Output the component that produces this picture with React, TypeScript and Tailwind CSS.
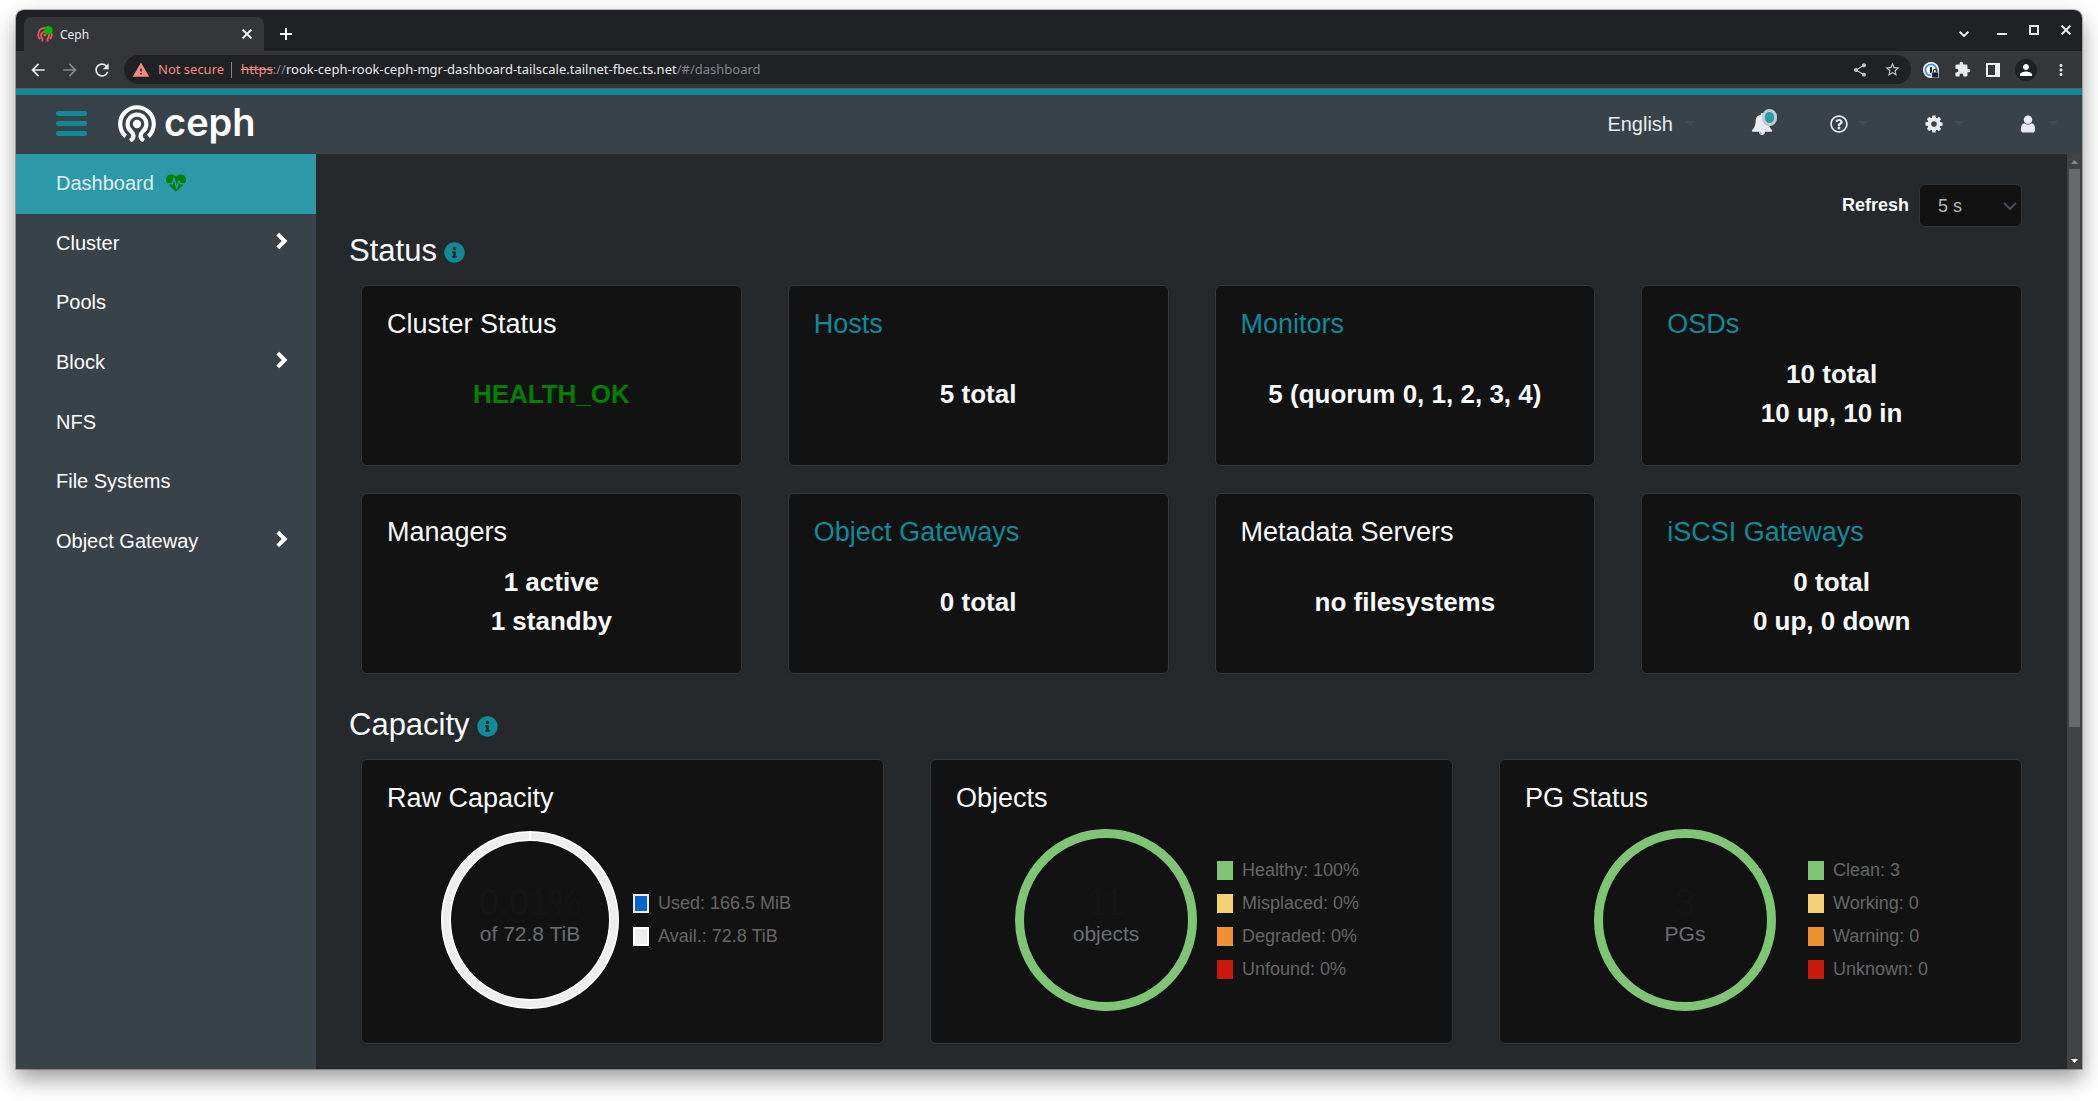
import React from 'react';
import { FaInfoCircle, FaRegQuestionCircle } from 'react-icons/fa';
import {
  MdArrowBack,
  MdArrowForward,
  MdExtension,
  MdMoreVert,
  MdPerson,
  MdRefresh,
  MdShare,
  MdStarBorder,
  MdWarning,
} from 'react-icons/md';

type Slice = { label: string; color: string };

type StatusCardData = { title: string; link?: boolean; lines: string[]; ok?: boolean };

type ChartData = {
  title: string;
  value: string;
  unit: string;
  ring: 'white' | 'green';
  layout: string;
  slices: Slice[];
};

const menu = [
  { name: 'Dashboard', active: true },
  { name: 'Cluster', children: true },
  { name: 'Pools' },
  { name: 'Block', children: true },
  { name: 'NFS' },
  { name: 'File Systems' },
  { name: 'Object Gateway', children: true },
];

const statusCards: StatusCardData[] = [
  { title: 'Cluster Status', lines: ['HEALTH_OK'], ok: true },
  { title: 'Hosts', link: true, lines: ['5 total'] },
  { title: 'Monitors', link: true, lines: ['5 (quorum 0, 1, 2, 3, 4)'] },
  { title: 'OSDs', link: true, lines: ['10 total', '10 up, 10 in'] },
  { title: 'Managers', lines: ['1 active', '1 standby'] },
  { title: 'Object Gateways', link: true, lines: ['0 total'] },
  { title: 'Metadata Servers', lines: ['no filesystems'] },
  { title: 'iSCSI Gateways', link: true, lines: ['0 total', '0 up, 0 down'] },
];

const charts: ChartData[] = [
  {
    title: 'Raw Capacity',
    value: '0.01%',
    unit: 'of 72.8 TiB',
    ring: 'white',
    layout: 'gap-3 pl-[52px]',
    slices: [
      { label: 'Used: 166.5 MiB', color: 'bg-[#0066cc] border-2 border-[#ededed]' },
      { label: 'Avail.: 72.8 TiB', color: 'bg-[#ededed] border-2 border-white' },
    ],
  },
  {
    title: 'Objects',
    value: '11',
    unit: 'objects',
    ring: 'green',
    layout: 'gap-5 pl-[59px]',
    slices: [
      { label: 'Healthy: 100%', color: 'bg-[#7ec674]' },
      { label: 'Misplaced: 0%', color: 'bg-[#f5d174]' },
      { label: 'Degraded: 0%', color: 'bg-[#ef9234]' },
      { label: 'Unfound: 0%', color: 'bg-[#c9190b]' },
    ],
  },
  {
    title: 'PG Status',
    value: '3',
    unit: 'PGs',
    ring: 'green',
    layout: 'gap-8 pl-[69px]',
    slices: [
      { label: 'Clean: 3', color: 'bg-[#7ec674]' },
      { label: 'Working: 0', color: 'bg-[#f5d174]' },
      { label: 'Warning: 0', color: 'bg-[#ef9234]' },
      { label: 'Unknown: 0', color: 'bg-[#c9190b]' },
    ],
  },
];

const BellIcon = () => (
  <svg viewBox="0 0 1792 1792" className="size-[22px]" fill="currentColor" aria-hidden="true">
    <path d="M912 1696q0-16-16-16-59 0-101.5-42.5t-42.5-101.5q0-16-16-16t-16 16q0 73 51.5 124.5t124.5 51.5q16 0 16-16zm816-288q0 52-38 90t-90 38h-448q0 106-75 181t-181 75-181-75-75-181h-448q-52 0-90-38t-38-90q50-42 91-88t85-119.5 74.5-158.5 50-206 19.5-260q0-152 117-282.5t307-158.5q-8-19-8-39 0-40 28-68t68-28 68 28 28 68q0 20-8 39 190 28 307 158.5t117 282.5q0 139 19.5 260t50 206 74.5 158.5 85 119.5 91 88z" />
  </svg>
);

const CogIcon = () => (
  <svg viewBox="0 0 1792 1792" className="size-5" fill="currentColor" aria-hidden="true">
    <path d="M1152 896q0-106-75-181t-181-75-181 75-75 181 75 181 181 75 181-75 75-181zm512-109v222q0 12-8 23t-20 13l-185 28q-19 54-39 91 35 50 107 138 10 12 10 25t-9 23q-27 37-99 108t-94 71q-12 0-26-9l-138-108q-44 23-91 38-16 136-29 186-7 28-36 28h-222q-14 0-24.5-8.5t-11.5-21.5l-28-184q-49-16-90-37l-141 107q-10 9-25 9-14 0-25-11-126-114-165-168-7-10-7-23 0-12 8-23 15-21 51-66.5t54-70.5q-27-50-41-99l-183-27q-13-2-21-12.5t-8-23.5v-222q0-12 8-23t19-13l186-28q14-46 39-92-40-57-107-138-10-12-10-24 0-10 9-23 26-36 98.5-107.5t94.5-71.5q13 0 26 10l138 107q44-23 91-38 16-136 29-186 7-28 36-28h222q14 0 24.5 8.5t11.5 21.5l28 184q49 16 90 37l142-107q9-9 24-9 13 0 25 10 129 119 165 170 7 8 7 22 0 12-8 23-15 21-51 66.5t-54 70.5q26 50 41 98l183 28q13 2 21 12.5t8 23.5z" />
  </svg>
);

const UserIcon = () => (
  <svg viewBox="0 0 1792 1792" className="size-5" fill="currentColor" aria-hidden="true">
    <path d="M1536 1399q0 109-62.5 187t-150.5 78h-854q-88 0-150.5-78t-62.5-187q0-85 8.5-160.5t31.5-152 58.5-131 94-89 134.5-34.5q131 128 313 128t313-128q76 0 134.5 34.5t94 89 58.5 131 31.5 152 8.5 160.5zm-256-887q0 159-112.5 271.5t-271.5 112.5-271.5-112.5-112.5-271.5 112.5-271.5 271.5-112.5 271.5 112.5 112.5 271.5z" />
  </svg>
);

const HeartbeatIcon = () => (
  <svg viewBox="0 0 1792 1792" className="size-5" fill="#008000" aria-hidden="true">
    <path d="M1280 1024h305q-5 6-10 10.5t-9 7.5l-3 4-623 600q-18 18-44 18t-44-18l-624-602q-5-2-21-20h369q22 0 39.5-13.5t22.5-34.5l70-281 190 667q6 20 23 33t39 13q21 0 38-13t23-33l146-485 56 112q18 35 57 35zm512-428q0 145-103 300h-369l-111-221q-8-17-25.5-27t-36.5-8q-45 5-56 46l-129 430-196-686q-6-20-23.5-33t-39.5-13-39 13.5-22 34.5l-116 464h-423q-103-155-103-300 0-220 127-344t351-124q62 0 126.5 21.5t120 58 95.5 68.5 76 68q36-36 76-68t95.5-68.5 120-58 126.5-21.5q224 0 351 124t127 344z" />
  </svg>
);

const CephMark = () => (
  <svg viewBox="0 0 38 37" className="h-[37px] w-[38px]" fill="none" stroke="#fff" aria-hidden="true">
    <circle cx="19" cy="19" r="4.2" fill="#fff" stroke="none" />
    <path strokeWidth="4.2" d="M7.6 31.4A16.8 16.8 0 1 1 30.4 31.4" />
    <path
      strokeWidth="4.2"
      d="M12.2 35.8Q15.8 33.4 15.4 30.4Q15.2 28.6 13.2 26.4A9.4 9.4 0 1 1 24.8 26.4Q22.8 28.6 22.6 30.4Q22.2 33.4 25.8 35.8"
    />
  </svg>
);

const TabIcon = () => (
  <svg viewBox="0 0 16 16" className="size-4" fill="none" aria-hidden="true">
    <path stroke="#ee5c54" strokeWidth="1.8" d="M3 13.2A6.8 6.8 0 1 1 13 13.2M5.4 15.4V12.600A4 4 0 1 1 10.600 12.600V15.4" />
    <circle cx="8" cy="9" r="1.4" fill="#ee5c54" />
    <circle cx="11.500" cy="4.300" r="4.200" fill="#00b800" />
  </svg>
);

const PasswordIcon = () => (
  <svg viewBox="0 0 16 16" className="size-4" aria-hidden="true">
    <circle cx="8" cy="8" r="8" fill="#fff" />
    <circle cx="8" cy="8" r="5.6" fill="#fff" stroke="#3b92f3" strokeWidth="1.8" />
    <rect x="7" y="5" width="2" height="6" rx="0.6" fill="#202124" />
    <rect x="8.6" y="10" width="7" height="6" rx="1" fill="#202124" stroke="#fff" strokeWidth="0.7" />
    <path d="M10.4 10V9a1.700 1.700 0 0 1 3.400 0v1" fill="none" stroke="#202124" strokeWidth="1.2" />
  </svg>
);

const ChevronIcon = () => (
  <svg viewBox="0 0 12 18" className="mb-1 ml-auto h-[18px] w-3" fill="none" stroke="currentColor" strokeWidth="4" aria-hidden="true">
    <path d="M1.800 2.200 8.600 9l-6.800 6.800" />
  </svg>
);

const CrossIcon = () => (
  <svg viewBox="0 0 10 10" className="size-2.5" stroke="currentColor" strokeWidth="2" aria-hidden="true">
    <path d="M.6.6l8.8 8.8M9.4.6.6 9.4" />
  </svg>
);

const Caret = () => (
  <svg viewBox="0 0 10 5" className="h-[5px] w-[10px]" aria-hidden="true">
    <path d="M0 0h10L5 5z" fill="#474a4c" />
  </svg>
);

const BrowserChrome: React.FC = () => (
  <div className="font-['Noto_Sans',sans-serif] text-xs text-[#e8eaed]">
    {/* Tab strip */}
    <div className="flex h-[41px] items-end bg-[#202124] pl-2">
      <div className="flex h-[34px] w-60 items-center rounded-t-lg bg-[#35363a] pr-2 pl-[13px]">
        <TabIcon />
        <span className="ml-[7px] flex-1 pt-0.5">Ceph</span>
        <button aria-label="Close tab" className="p-1">
          <CrossIcon />
        </button>
      </div>
      <button aria-label="New tab" className="ml-3.5 flex h-[34px] items-center px-0.5">
        <svg viewBox="0 0 12 12" className="size-3" stroke="#fff" strokeWidth="2" aria-hidden="true">
          <path d="M6 0v12M0 6h12" />
        </svg>
      </button>
      <div className="ml-auto flex h-full items-center gap-3 pr-1.5">
        <button aria-label="Search tabs" className="mr-1.5 flex size-5 items-center justify-center pt-1.5">
          <svg viewBox="0 0 10 6" className="h-1.5 w-2.5" fill="none" stroke="currentColor" strokeWidth="2" aria-hidden="true">
            <path d="M.6.8 5 5 9.4.8" />
          </svg>
        </button>
        <button aria-label="Minimize" className="flex size-5 items-center justify-center pt-1.5">
          <span className="h-0.5 w-2.5 bg-[#e8eaed]" />
        </button>
        <button aria-label="Maximize" className="flex size-5 items-center justify-center pb-0.5">
          <span className="size-2.5 border-2 border-[#e8eaed]" />
        </button>
        <button aria-label="Close window" className="flex size-5 items-center justify-center pb-0.5">
          <CrossIcon />
        </button>
      </div>
    </div>

    {/* Toolbar */}
    <div className="flex h-[38px] items-center border-b border-[#5c5d60] bg-[#35363a] pr-3 pl-3">
      <div className="flex items-center gap-3 pr-3">
        <button aria-label="Back">
          <MdArrowBack className="size-5" />
        </button>
        <button aria-label="Forward" className="text-[#87888b]">
          <MdArrowForward className="size-5" />
        </button>
        <button aria-label="Reload">
          <MdRefresh className="size-5" />
        </button>
      </div>
      <div className="flex h-[29px] flex-1 items-center rounded-full bg-[#202124] pr-2.5 pl-2">
        <MdWarning className="size-[18px] text-[#f28b82]" />
        <span className="ml-2 text-[13px] text-[#f28b82]">Not secure</span>
        <span className="mr-[9px] ml-[7px] h-4 w-px bg-[#80868b]" />
        <span className="flex-1 text-[13px] text-[#80868b]">
          <span className="text-[#f28b82] line-through">https</span>://
          <span className="text-[#e8eaed]">rook-ceph-rook-ceph-mgr-dashboard-tailscale.tailnet-fbec.ts.net</span>
          /#/dashboard
        </span>
        <button aria-label="Share" className="mr-4 text-[#c4c7c5]">
          <MdShare className="size-4" />
        </button>
        <button aria-label="Bookmark" className="text-[#c4c7c5]">
          <MdStarBorder className="size-[17px]" />
        </button>
      </div>
      <div className="flex items-center gap-[15px] pl-3">
        <button aria-label="Password manager">
          <PasswordIcon />
        </button>
        <button aria-label="Extensions">
          <MdExtension className="size-[17px]" />
        </button>
        <button aria-label="Side panel" className="size-3.5 border-2 border-r-[5px] border-[#f1f3f4]" />
        <button aria-label="Profile" className="flex size-[22px] items-center justify-center rounded-full bg-[#202124]">
          <MdPerson className="size-[18px] text-white" />
        </button>
        <button aria-label="Browser menu">
          <MdMoreVert className="size-[18px]" />
        </button>
      </div>
    </div>
  </div>
);

const Navbar: React.FC = () => (
  <header className="flex h-[65px] items-center border-t-[6px] border-[#118a98] bg-[#374249] pb-0.5 text-xl text-[#e9ecef]">
    <button aria-label="Toggle sidebar" className="ml-10 flex flex-col gap-[5px]">
      <span className="h-[5px] w-[31px] rounded-xs bg-[#118a98]" />
      <span className="h-[5px] w-[31px] rounded-xs bg-[#118a98]" />
      <span className="h-[5px] w-[31px] rounded-xs bg-[#118a98]" />
    </button>
    <a href="#/dashboard" className="ml-[31px] flex items-center gap-2 text-white">
      <CephMark />
      <span className="pb-1 font-['Inter',sans-serif] text-[38px] leading-9 font-semibold">ceph</span>
    </a>
    <div className="ml-auto flex items-center pr-6">
      <button className="flex items-center gap-3">
        English <Caret />
      </button>
      <button aria-label="Notifications" className="relative ml-[56px]">
        <BellIcon />
        <span className="absolute -top-1 -right-1 h-[17px] w-[15px] rounded-full border-[3px] border-[#becbd1] bg-[#2b99a8]" />
      </button>
      <button aria-label="Help" className="ml-[57px] flex items-center gap-2.5">
        <FaRegQuestionCircle className="size-[18px]" />
        <Caret />
      </button>
      <button aria-label="Settings" className="ml-[56px] flex items-center gap-2.5">
        <CogIcon />
        <Caret />
      </button>
      <button aria-label="Account" className="ml-[54px] flex items-center gap-2.5">
        <UserIcon />
        <Caret />
      </button>
    </div>
  </header>
);

const Sidebar: React.FC = () => (
  <nav className="w-[300px] shrink-0 bg-[#374249] text-xl text-white">
    <ul className="grid h-[418px] grid-rows-7">
      {menu.map((item) => (
        <li key={item.name}>
          <a
            href="#/"
            className={`flex h-full items-center pr-7 pb-0.5 pl-10 ${item.active ? 'bg-[#2b99a8] text-[#e0eef0]' : ''}`}
          >
            {item.name}
            {item.active && (
              <span className="ml-3">
                <HeartbeatIcon />
              </span>
            )}
            {item.children && <ChevronIcon />}
          </a>
        </li>
      ))}
    </ul>
  </nav>
);

const SectionTitle: React.FC<{ children: React.ReactNode }> = ({ children }) => (
  <h2 className="mb-2.5 flex items-center gap-[7px] text-[31px] leading-[48px] text-[#f8f9fa]">
    {children}
    <FaInfoCircle className="mt-0.5 size-[21px] text-[#118a98]" />
  </h2>
);

const Card: React.FC<{ title: string; link?: boolean; children: React.ReactNode }> = ({ title, link, children }) => (
  <section className="rounded-md border border-[#34383b] bg-[#121212] px-[25px] pt-[22px] pb-8 shadow-sm">
    <h3 className="mb-[15px] text-[27px] leading-8 text-[#f8f9fa]">
      {link ? (
        <a href="#/" className="text-[#118a98]">
          {title}
        </a>
      ) : (
        title
      )}
    </h3>
    {children}
  </section>
);

const Donut: React.FC<{ chart: ChartData }> = ({ chart }) => (
  <div className="relative flex size-[182px] shrink-0 flex-col items-center justify-center pb-2">
    <svg viewBox="0 0 182 182" className="absolute inset-0" fill="none" aria-hidden="true">
      {chart.ring === 'white' ? (
        <>
          <circle cx="91" cy="91" r="84" stroke="#fff" strokeWidth="10" />
          <circle cx="91" cy="91" r="84" stroke="#ededed" strokeWidth="7" />
          <path d="M91 2v10" stroke="#fff" strokeWidth="2" />
        </>
      ) : (
        <circle cx="91" cy="91" r="86.5" stroke="#7ec674" strokeWidth="9" />
      )}
    </svg>
    <span className="text-4xl leading-9 text-[#151515]">{chart.value}</span>
    <span className="text-[21px] leading-[26px] text-[#6a6e73]">{chart.unit}</span>
  </div>
);

const App: React.FC = () => (
  <div className="h-screen bg-white px-4 pt-2.5 pb-8 font-['Liberation_Sans',Arial,sans-serif]">
    <div className="flex h-full flex-col overflow-hidden rounded-t-lg shadow-[0_0_0_1px_rgba(0,0,0,0.25),0_10px_22px_rgba(0,0,0,0.4)]">
      <BrowserChrome />
      <Navbar />
      <div className="flex min-h-0 flex-1">
        <Sidebar />
        <main className="min-w-0 flex-1 overflow-hidden bg-[#26292c] px-[33px] pt-[30px]">
          <div className="mr-3 flex items-center justify-end gap-2.5 text-lg">
            <label htmlFor="refresh" className="pb-0.5 font-bold text-[#f8f9fa]">
              Refresh
            </label>
            <div className="relative">
              <select
                id="refresh"
                className="block h-[43px] w-[103px] appearance-none rounded-md border border-[#2f3336] bg-[#121212] pl-[18px] text-[#b3b7bb]"
              >
                <option>5 s</option>
              </select>
              <svg
                viewBox="0 0 14 8"
                className="pointer-events-none absolute top-[18px] right-[5px] h-2 w-3.5"
                fill="none"
                stroke="#495057"
                strokeWidth="2"
                aria-hidden="true"
              >
                <path d="M1 1l6 6 6-6" />
              </svg>
            </div>
          </div>

          <SectionTitle>Status</SectionTitle>
          <div className="mx-3 grid grid-cols-4 gap-x-[46px] gap-y-[27px]">
            {statusCards.map((card) => (
              <Card key={card.title} title={card.title} link={card.link}>
                <div
                  className={`flex h-[78px] flex-col justify-center text-center text-[26px] leading-[39px] font-bold ${
                    card.ok ? 'text-[#008000]' : 'text-[#f8f9fa]'
                  }`}
                >
                  {card.lines.map((line) => (
                    <p key={line}>{line}</p>
                  ))}
                </div>
              </Card>
            ))}
          </div>

          <div className="mt-[27px]">
            <SectionTitle>Capacity</SectionTitle>
          </div>
          <div className="mx-3 grid grid-cols-3 gap-[46px]">
            {charts.map((chart) => (
              <Card key={chart.title} title={chart.title}>
                <div className={`flex items-center ${chart.layout}`}>
                  <Donut chart={chart} />
                  <ul className="text-lg leading-[33px] text-[#666]">
                    {chart.slices.map((slice) => (
                      <li key={slice.label} className="flex items-center gap-[9px]">
                        <span className={`h-[19px] w-4 ${slice.color}`} />
                        {slice.label}
                      </li>
                    ))}
                  </ul>
                </div>
              </Card>
            ))}
          </div>
        </main>

        {/* Scrollbar track */}
        <div className="flex w-[15px] flex-col items-center bg-[#424242]" aria-hidden="true">
          <svg viewBox="0 0 15 15" className="size-[15px] shrink-0">
            <path d="M4 10h7L7.5 6z" fill="#8b8b8b" />
          </svg>
          <div className="h-[61%] w-[11px] bg-[#686868]" />
          <svg viewBox="0 0 15 15" className="mt-auto size-[15px] shrink-0">
            <path d="M4 5h7L7.5 9z" fill="#fff" />
          </svg>
        </div>
      </div>
    </div>
  </div>
);

export default App;
